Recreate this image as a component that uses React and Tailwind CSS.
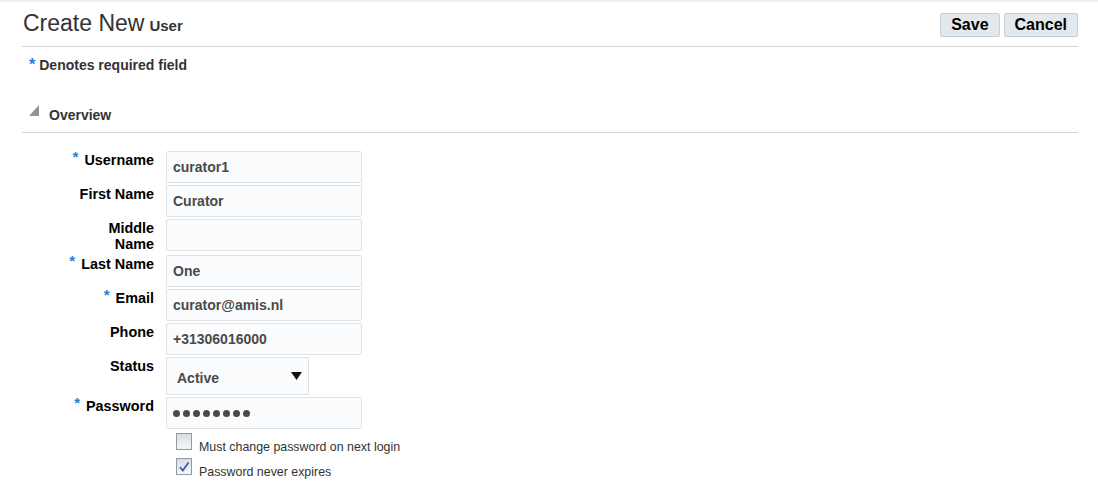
import React from 'react';

const fields = [
  { label: 'Username', required: true, value: 'curator1' },
  { label: 'First Name', value: 'Curator' },
  { label: ['Middle', 'Name'], value: '' },
  { label: 'Last Name', required: true, value: 'One' },
  { label: 'Email', required: true, value: 'curator@amis.nl' },
  { label: 'Phone', value: '+31306016000' },
];

const Star = () => <span className="text-[#2a7bd6] text-[15px] font-bold leading-none relative top-[-3px] mr-[6px]">*</span>;

const Label = ({ label, required }) => (
  <div className="w-[144px] shrink-0 pr-[12px] pl-[26px] pt-[1px] text-right text-[14.4px] font-bold leading-[16px] text-black whitespace-nowrap">
    {required && <Star />}
    {Array.isArray(label) ? label.map((l) => <div key={l}>{l}</div>) : label}
  </div>
);

const Input = ({ value }) => (
  <div className="w-[196px] h-[32px] border border-[#dde2e7] rounded-[2px] bg-[#fbfcfd] px-[6px] flex items-center text-[14px] font-bold text-[#4a4a4a]">
    {value}
  </div>
);

const Checkbox = ({ checked, label }) => (
  <div className="flex items-start gap-[7px] h-[17px]">
    <div className="w-[16px] h-[17px] border border-[#8f9aa5] bg-gradient-to-b from-[#d8dbdf] to-[#f6f7f8] flex items-center justify-center">
      {checked && (
        <svg width="12" height="12" viewBox="0 0 12 12">
          <path d="M2 6 L4.8 9.5 L10.5 1.5" fill="none" stroke="#3a5ba8" strokeWidth="1.7" />
        </svg>
      )}
    </div>
    <span className="text-[12.4px] text-[#333] leading-none mt-[8px]">{label}</span>
  </div>
);

export default function App() {
  return (
    <div className="w-[1098px] h-[483px] bg-white border-t-2 border-[#f1f1f1] overflow-hidden" style={{ fontFamily: '"Liberation Sans", Arial, sans-serif' }}>
      <div className="ml-[22px] mr-[20px]">
        <div className="flex items-end justify-between h-[45px] border-b border-[#d6d6d6] pb-[9px]">
          <div className="flex items-baseline pl-[1px] text-[#333]">
            <span className="text-[23px] leading-none">Create New</span>
            <span className="text-[15px] font-bold ml-[5px]">User</span>
          </div>
          <div className="flex gap-[4px]">
            <button className="h-[24px] px-[10px] bg-[#e3e8ec] border border-[#c6cfd6] rounded-[2px] text-[16px] font-bold text-black leading-none">Save</button>
            <button className="h-[24px] px-[10px] bg-[#e3e8ec] border border-[#c6cfd6] rounded-[2px] text-[16px] font-bold text-black leading-none">Cancel</button>
          </div>
        </div>

        <div className="pl-[7px] pt-[10px] text-[14px] font-bold text-[#333] flex items-start">
          <span className="text-[#2a7bd6] text-[16px] leading-none mr-[4px]">*</span>
          <span className="leading-[16px]">Denotes required field</span>
        </div>

        <div className="mt-[30px] h-[30px] border-b border-[#d6d6d6] flex items-start">
          <svg width="10" height="11" viewBox="0 0 10 11" className="ml-[7px] mt-[2px]">
            <polygon points="10,0 10,11 0,11" fill="#8f9497" />
          </svg>
          <span className="ml-[10px] text-[14px] font-bold text-[#333] leading-[16px] mt-[4px]">Overview</span>
        </div>

        <div className="pt-[18px]">
          {fields.map((f, i) => (
            <div key={i} className={`flex ${i === 2 ? 'mb-[3px]' : 'mb-[2px]'}`}>
              <Label label={f.label} required={f.required} />
              <Input value={f.value} />
            </div>
          ))}
          <div className="flex mb-[2px]">
            <Label label="Status" />
            <div className="w-[143px] h-[38px] border border-[#dde2e7] bg-[#fbfcfd] pl-[10px] pr-[6px] flex items-center justify-between text-[14px] font-bold text-[#4a4a4a]">
              <span className="mt-[5px]">Active</span>
              <svg width="11" height="8" viewBox="0 0 11 8">
                <polygon points="0,0 11,0 5.5,8" fill="#111" />
              </svg>
            </div>
          </div>
          <div className="flex">
            <Label label="Password" required />
            <div className="w-[196px] h-[32px] border border-[#dde2e7] rounded-[2px] bg-[#fbfcfd] px-[6px] flex items-center gap-[3px]">
              {Array.from({ length: 8 }).map((_, i) => (
                <span key={i} className="w-[7px] h-[7px] rounded-full bg-[#4a4a4a]" />
              ))}
            </div>
          </div>
          <div className="pl-[154px] pt-[4px] flex flex-col gap-[8px]">
            <Checkbox label="Must change password on next login" />
            <Checkbox checked label="Password never expires" />
          </div>
        </div>
      </div>
    </div>
  );
}
